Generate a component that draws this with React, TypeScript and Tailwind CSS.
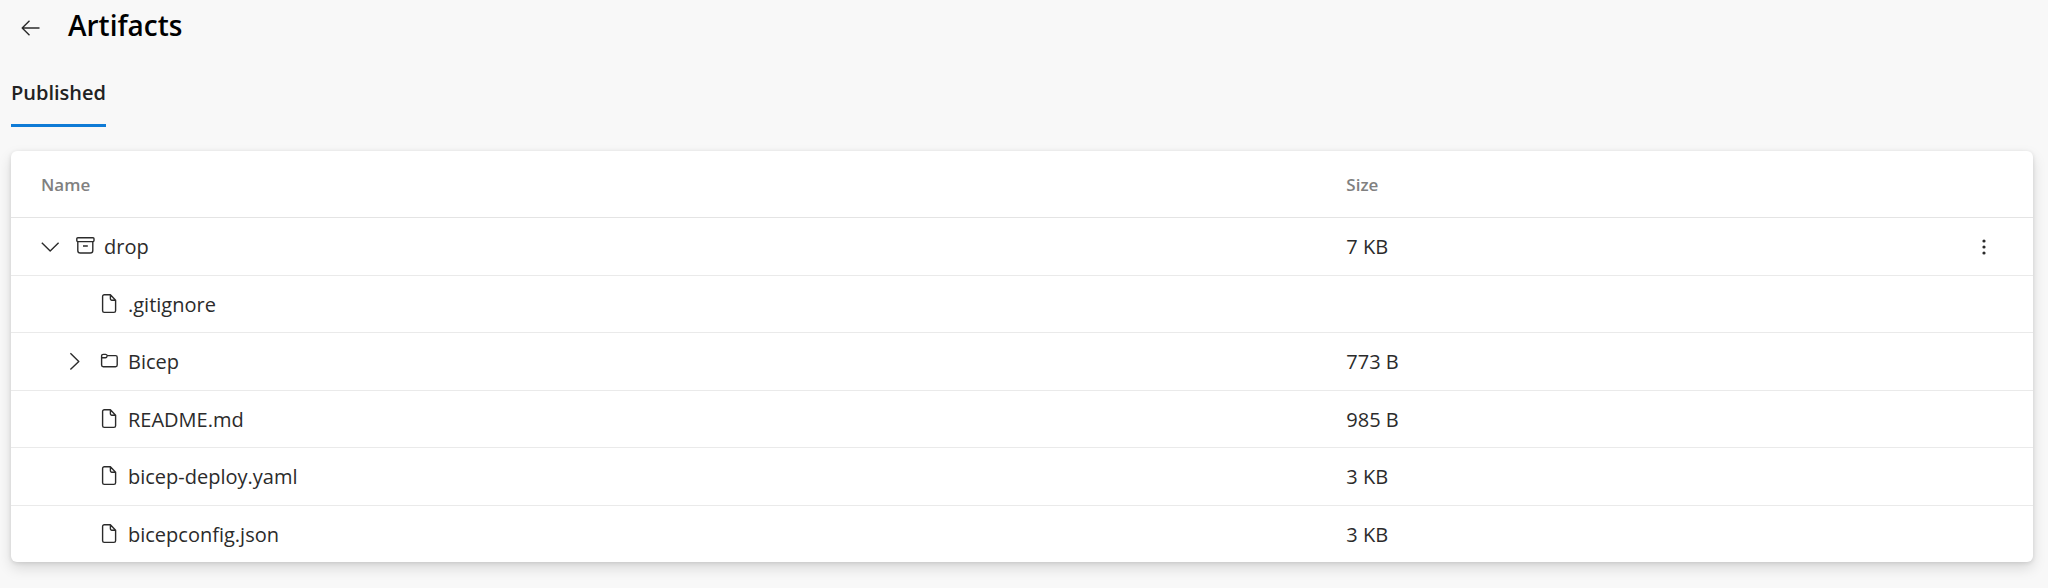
import type { ReactNode } from 'react';

type Kind = 'artifact' | 'folder' | 'file';

type Item = {
  name: string;
  kind: Kind;
  size: string;
};

const items: Item[] = [
  { name: 'drop', kind: 'artifact', size: '7 KB' },
  { name: '.gitignore', kind: 'file', size: '' },
  { name: 'Bicep', kind: 'folder', size: '773 B' },
  { name: 'README.md', kind: 'file', size: '985 B' },
  { name: 'bicep-deploy.yaml', kind: 'file', size: '3 KB' },
  { name: 'bicepconfig.json', kind: 'file', size: '3 KB' },
];

function Svg({ children }: { children: ReactNode }) {
  return (
    <svg
      width="20"
      height="20"
      viewBox="0 0 20 20"
      fill="none"
      stroke="currentColor"
      strokeWidth="1.4"
      strokeLinejoin="round"
      className="block shrink-0"
      aria-hidden="true"
    >
      {children}
    </svg>
  );
}

function ItemIcon({ kind }: { kind: Kind }) {
  if (kind === 'artifact') {
    return (
      <Svg>
        <rect x="0.8" y="1.8" width="17.2" height="3.8" rx="1" />
        <path d="M1.8 5.6v8.8a2.6 2.6 0 0 0 2.6 2.6h9.8a2.6 2.6 0 0 0 2.6-2.6V5.6M7 10h4.8" />
      </Svg>
    );
  }
  if (kind === 'folder') {
    return (
      <Svg>
        <path d="M1.6 6.6V5a1.6 1.6 0 0 1 1.6-1.6h2.4c.8 0 1.3.4 1.7 1.2h8.3a1.6 1.6 0 0 1 1.6 1.6v7.9a1.6 1.6 0 0 1-1.6 1.6H3.2a1.6 1.6 0 0 1-1.6-1.6zM1.6 6.8h3.8c1 0 1.6-.7 1.9-2.2" />
      </Svg>
    );
  }
  return (
    <Svg>
      <path d="M10.4 0.8H4.3a1.7 1.7 0 0 0-1.7 1.7v14.2a1.7 1.7 0 0 0 1.7 1.7h9.6a1.7 1.7 0 0 0 1.7-1.7V6.2zv4a1.4 1.4 0 0 0 1.4 1.4h3.8" />
    </Svg>
  );
}

function Toggle({ name, open }: { name: string; open: boolean }) {
  return (
    <button type="button" aria-label={`Toggle ${name}`} aria-expanded={open} className="block cursor-pointer">
      <Svg>
        {open ? <path d="M1.8 5.8l8.4 8.2 8.4-8.2" /> : <path d="M6.4 1.2l8.4 8.2-8.4 8.2" />}
      </Svg>
    </button>
  );
}

function Row({ item }: { item: Item }) {
  const root = item.kind === 'artifact';

  return (
    <tr className="group odd:h-[58px] even:h-[57px] even:last:h-[56px]">
      <td className={`border-b border-[#eaeaea] pt-px group-last:border-b-0 ${root ? 'pl-[29px]' : 'pl-[53px]'}`}>
        <div className="flex items-center">
          <div className="mr-4 w-5 shrink-0">
            {item.kind !== 'file' && <Toggle name={item.name} open={root} />}
          </div>
          <div className="mr-2 pb-0.5">
            <ItemIcon kind={item.kind} />
          </div>
          <span>{item.name}</span>
        </div>
      </td>
      <td className="border-b border-[#eaeaea] pt-px pl-[21px] group-last:border-b-0">{item.size}</td>
      <td className="border-b border-[#eaeaea] pr-[39px] group-last:border-b-0">
        {root && (
          <button type="button" aria-label="More options" className="ml-auto block cursor-pointer">
            <svg width="20" height="20" viewBox="0 0 20 20" fill="currentColor" className="block">
              <circle cx="10" cy="4" r="1.6" />
              <circle cx="10" cy="10" r="1.6" />
              <circle cx="10" cy="16" r="1.6" />
            </svg>
          </button>
        )}
      </td>
    </tr>
  );
}

export default function App() {
  return (
    <div className="min-h-screen bg-[#f8f8f8] pr-[15px] pb-6 pl-[11px] font-['Open_Sans','Noto_Sans',sans-serif] text-[20px] text-[#2b2b2b]">
      <header className="flex h-[50px] items-center gap-7 pl-[9px]">
        <button type="button" aria-label="Back" className="mt-1.5 cursor-pointer">
          <Svg>
            <path d="M19.5 10H2M9.5 2.8L2.2 10l7.3 7.2" />
          </Svg>
        </button>
        <h1 className="text-[28px] leading-10 font-semibold text-black">Artifacts</h1>
      </header>

      <nav className="mt-[18px] flex">
        <a
          href="#published"
          aria-current="page"
          className="flex h-[59px] border-b-3 border-[#0f7bd6] pt-[11px] text-[20px] leading-7 font-semibold text-[#222]"
        >
          Published
        </a>
      </nav>

      <main className="mt-6 overflow-hidden rounded-md bg-white shadow-[0_6px_14px_rgba(0,0,0,0.13),0_1px_4px_rgba(0,0,0,0.11)]">
        <table className="w-full table-fixed border-separate border-spacing-0 text-left">
          <colgroup>
            <col className="w-[65%]" />
            <col className="w-[25%]" />
            <col className="w-[10%]" />
          </colgroup>
          <thead className="text-[17px] text-[#808080]">
            <tr className="h-[67px]">
              <th className="border-b border-[#e4e4e4] pt-0.5 pl-[30px] font-semibold">Name</th>
              <th className="border-b border-[#e4e4e4] pt-0.5 pl-[21px] font-semibold">Size</th>
              <th className="border-b border-[#e4e4e4]" aria-label="Actions" />
            </tr>
          </thead>
          <tbody>
            {items.map((item) => (
              <Row key={item.name} item={item} />
            ))}
          </tbody>
        </table>
      </main>
    </div>
  );
}
